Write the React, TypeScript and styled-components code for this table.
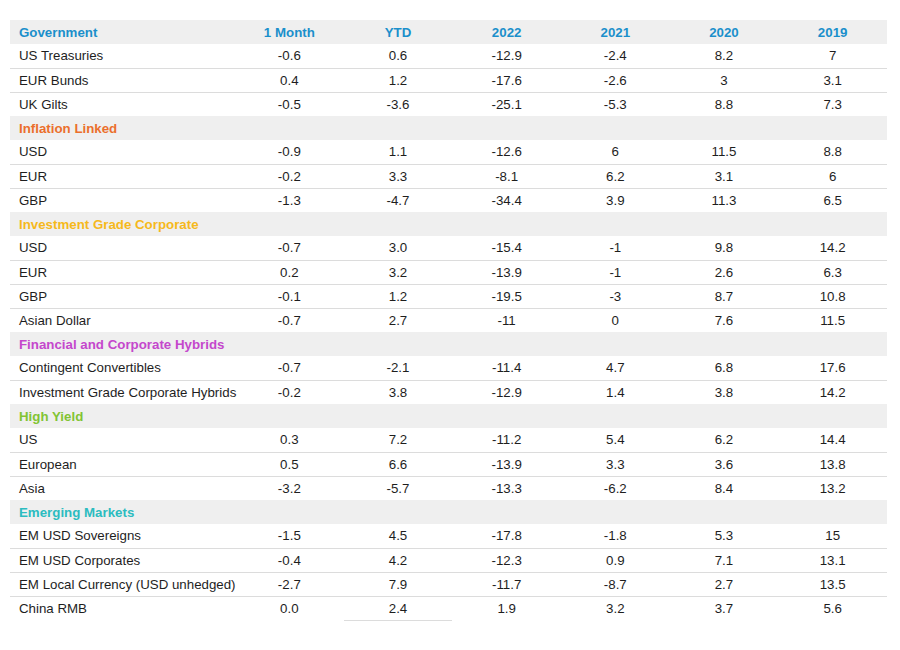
import React from "react";
import styled, { createGlobalStyle } from "styled-components";

const GlobalStyle = createGlobalStyle`
  body {
    margin: 0;
    background: #ffffff;
    font-family: "Liberation Sans", Arial, sans-serif;
  }
`;

const Page = styled.div`
  padding: 20px 0 0 10px;
`;

const Table = styled.table`
  width: 877px;
  border-collapse: collapse;
  table-layout: fixed;
  font-size: 13.3px;
  color: #1e1e1e;
`;

const LabelCol = styled.col`
  width: 225px;
`;

const SectionRow = styled.tr`
  background: #efefef;
  height: 24px;
`;

const SectionCell = styled.td<{ $color: string; $left?: boolean }>`
  padding: 0 0 0 ${(p) => (p.$left ? "9px" : "0")};
  text-align: ${(p) => (p.$left ? "left" : "center")};
  font-weight: bold;
  color: ${(p) => p.$color};
`;

const DataRow = styled.tr<{ $last?: boolean }>`
  height: 24px;
  border-bottom: ${(p) => (p.$last ? "none" : "1px solid #dcdcdc")};
`;

const LabelCell = styled.td`
  padding: 0 0 0 9px;
  text-align: left;
  white-space: nowrap;
`;

const ValueCell = styled.td<{ $underline?: boolean }>`
  padding: 0;
  text-align: center;
  border-bottom: ${(p) => (p.$underline ? "1px solid #dcdcdc" : "none")};
`;

type Row = [string, string[]];
interface Section {
  title: string;
  color: string;
  rows: Row[];
}

const columns = ["1 Month", "YTD", "2022", "2021", "2020", "2019"];

const sections: Section[] = [
  {
    title: "Government",
    color: "#1b8fcb",
    rows: [
      ["US Treasuries", ["-0.6", "0.6", "-12.9", "-2.4", "8.2", "7"]],
      ["EUR Bunds", ["0.4", "1.2", "-17.6", "-2.6", "3", "3.1"]],
      ["UK Gilts", ["-0.5", "-3.6", "-25.1", "-5.3", "8.8", "7.3"]],
    ],
  },
  {
    title: "Inflation Linked",
    color: "#eb6f2d",
    rows: [
      ["USD", ["-0.9", "1.1", "-12.6", "6", "11.5", "8.8"]],
      ["EUR", ["-0.2", "3.3", "-8.1", "6.2", "3.1", "6"]],
      ["GBP", ["-1.3", "-4.7", "-34.4", "3.9", "11.3", "6.5"]],
    ],
  },
  {
    title: "Investment Grade Corporate",
    color: "#f6b91c",
    rows: [
      ["USD", ["-0.7", "3.0", "-15.4", "-1", "9.8", "14.2"]],
      ["EUR", ["0.2", "3.2", "-13.9", "-1", "2.6", "6.3"]],
      ["GBP", ["-0.1", "1.2", "-19.5", "-3", "8.7", "10.8"]],
      ["Asian Dollar", ["-0.7", "2.7", "-11", "0", "7.6", "11.5"]],
    ],
  },
  {
    title: "Financial and Corporate Hybrids",
    color: "#c447cc",
    rows: [
      ["Contingent Convertibles", ["-0.7", "-2.1", "-11.4", "4.7", "6.8", "17.6"]],
      ["Investment Grade Corporate Hybrids", ["-0.2", "3.8", "-12.9", "1.4", "3.8", "14.2"]],
    ],
  },
  {
    title: "High Yield",
    color: "#82c434",
    rows: [
      ["US", ["0.3", "7.2", "-11.2", "5.4", "6.2", "14.4"]],
      ["European", ["0.5", "6.6", "-13.9", "3.3", "3.6", "13.8"]],
      ["Asia", ["-3.2", "-5.7", "-13.3", "-6.2", "8.4", "13.2"]],
    ],
  },
  {
    title: "Emerging Markets",
    color: "#2cbcc0",
    rows: [
      ["EM USD Sovereigns", ["-1.5", "4.5", "-17.8", "-1.8", "5.3", "15"]],
      ["EM USD Corporates", ["-0.4", "4.2", "-12.3", "0.9", "7.1", "13.1"]],
      ["EM Local Currency (USD unhedged)", ["-2.7", "7.9", "-11.7", "-8.7", "2.7", "13.5"]],
      ["China RMB", ["0.0", "2.4", "1.9", "3.2", "3.7", "5.6"]],
    ],
  },
];

export default function App() {
  return (
    <>
      <GlobalStyle />
      <Page>
        <Table>
          <colgroup>
            <LabelCol />
            {columns.map((c) => (
              <col key={c} />
            ))}
          </colgroup>
          <tbody>
            {sections.map((section, si) => {
              const lastSection = si === sections.length - 1;
              return (
                <React.Fragment key={section.title}>
                  <SectionRow>
                    <SectionCell $left $color={section.color}>
                      {section.title}
                    </SectionCell>
                    {si === 0
                      ? columns.map((c) => (
                          <SectionCell key={c} $color={section.color}>
                            {c}
                          </SectionCell>
                        ))
                      : columns.map((c) => <SectionCell key={c} $color={section.color} />)}
                  </SectionRow>
                  {section.rows.map(([label, values], ri) => {
                    const last = ri === section.rows.length - 1;
                    const veryLast = lastSection && last;
                    return (
                      <DataRow key={label + ri} $last={last}>
                        <LabelCell>{label}</LabelCell>
                        {values.map((v, vi) => (
                          <ValueCell key={vi} $underline={veryLast && vi === 1}>
                            {v}
                          </ValueCell>
                        ))}
                      </DataRow>
                    );
                  })}
                </React.Fragment>
              );
            })}
          </tbody>
        </Table>
      </Page>
    </>
  );
}
